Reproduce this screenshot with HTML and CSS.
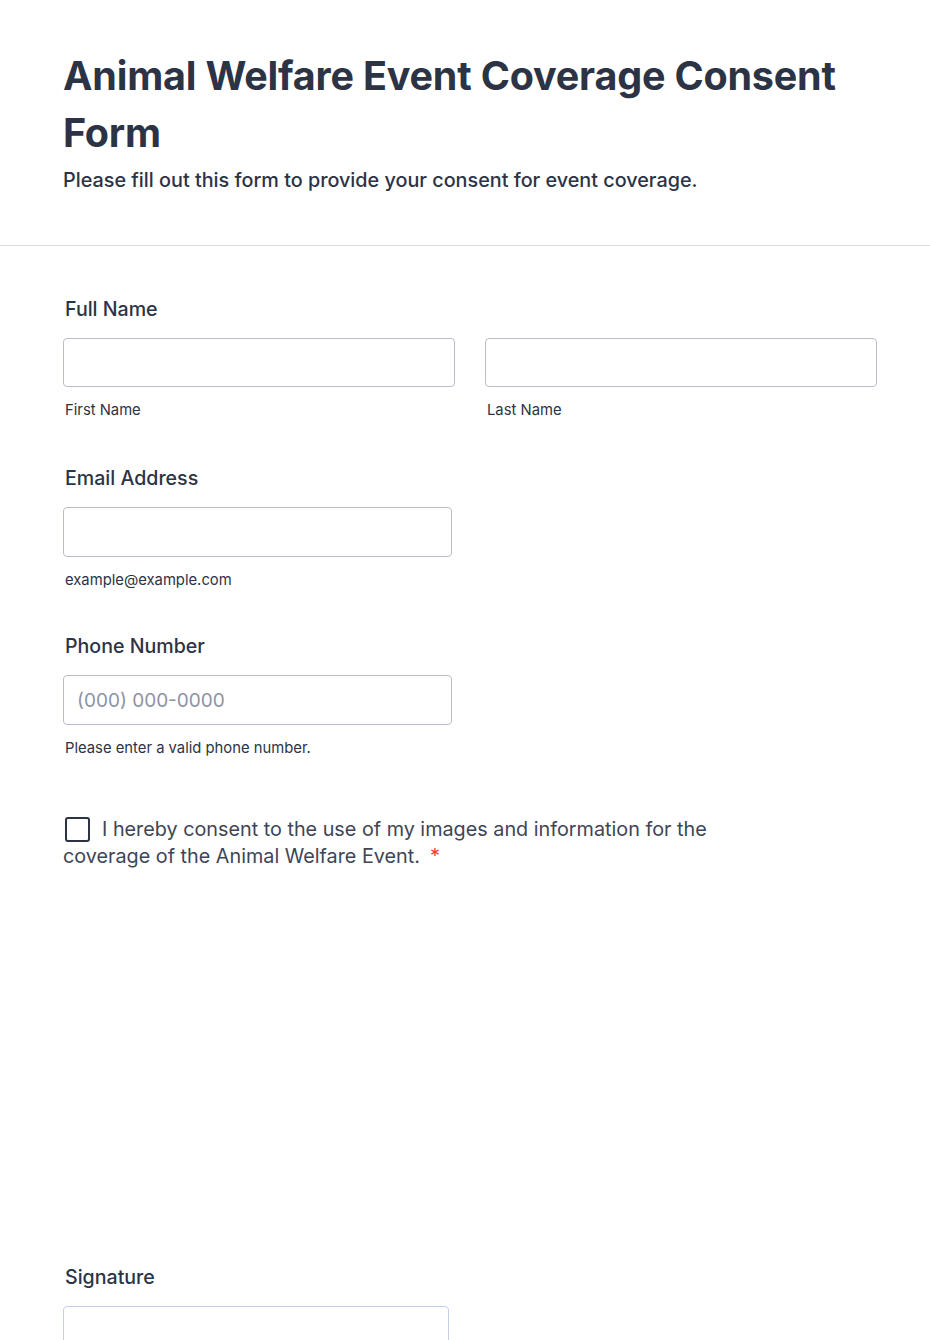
FILE: index.html
```html
<!DOCTYPE html>
<html lang="en">
<head>
  <meta charset="UTF-8" />
  <meta name="viewport" content="width=device-width, initial-scale=1.0" />
  <title>Animal Welfare Event Coverage Consent Form</title>
  <link rel="stylesheet" href="styles.css">
</head>
<body>
  <div class="form-header">
    <h1>Animal Welfare Event Coverage Consent Form</h1>
    <p class="subheader">Please fill out this form to provide your consent for event coverage.</p>
  </div>

  <form class="form-body">
    <div class="field name-field">
      <label class="field-label">Full Name</label>
      <div class="name-row">
        <div class="name-col">
          <input type="text" class="text-input" />
          <div class="sublabel">First Name</div>
        </div>
        <div class="name-col">
          <input type="text" class="text-input" />
          <div class="sublabel">Last Name</div>
        </div>
      </div>
    </div>

    <div class="field">
      <label class="field-label">Email Address</label>
      <input type="email" class="text-input half" />
      <div class="sublabel">example@example.com</div>
    </div>

    <div class="field">
      <label class="field-label">Phone Number</label>
      <input type="tel" class="text-input half" placeholder="(000) 000-0000" />
      <div class="sublabel">Please enter a valid phone number.</div>
    </div>

    <div class="field consent">
      <label class="consent-text"><span class="checkbox"></span>I hereby consent to the use of my images and information for the coverage of the Animal Welfare Event.<span class="required">*</span></label>
    </div>

    <div class="field signature">
      <label class="field-label">Signature</label>
      <div class="signature-pad"></div>
    </div>
  </form>
</body>
</html>
```

FILE: styles.css
```css
:root {
  --text: #2c3345;
  --border: #b8bdc9;
  --muted: #8c93a3;
}

body {
  margin: 0;
  font-family: 'Inter', 'Liberation Sans', sans-serif;
  color: var(--text);
  background: #fff;
}

.form-header {
  padding: 48px 40px 0 63px;
  height: 197px;
  border-bottom: 1px solid #dadde3;
}

h1 {
  margin: 0;
  font-size: 39.5px;
  line-height: 57px;
  font-weight: 700;
  letter-spacing: -0.2px;
}

.subheader {
  margin: 6px 0 0;
  font-size: 19.8px;
  line-height: 24px;
  font-weight: 500;
}

.form-body {
  padding: 51px 54px 0 63px;
}

.field {
  margin-bottom: 45px;
}

.name-field {
  margin-bottom: 47px;
}

.field-label {
  display: block;
  padding-left: 2px;
  font-size: 19.6px;
  line-height: 24px;
  font-weight: 500;
  margin-bottom: 17px;
}

.name-row {
  display: grid;
  grid-template-columns: 392px 392px;
  gap: 30px;
}

.text-input {
  display: block;
  box-sizing: border-box;
  width: 100%;
  height: 49px;
  margin: 0;
  padding: 0 13px;
  border: 1px solid var(--border);
  border-radius: 4px;
  font-family: inherit;
  font-size: 19px;
  color: var(--text);
  background: #fff;
}

.text-input.half {
  width: 389px;
  height: 50px;
}

.text-input::placeholder {
  color: var(--muted);
}

.sublabel {
  margin-top: 14px;
  padding-left: 2px;
  font-size: 14.8px;
  line-height: 18px;
}

.consent {
  margin-top: 59px;
}

.consent-text {
  display: block;
  max-width: 720px;
  font-size: 19.8px;
  line-height: 27px;
  color: #3e4556;
}

.checkbox {
  display: inline-block;
  box-sizing: border-box;
  width: 25px;
  height: 25px;
  margin: 0 12px 0 2px;
  border: 2px solid var(--text);
  border-radius: 3px;
  vertical-align: -6px;
}

.required {
  display: inline-block;
  color: #f23a3c;
  margin-left: 10px;
}

.signature {
  margin-top: 395px;
}

.signature .field-label {
  margin-bottom: 17px;
}

.signature-pad {
  width: 386px;
  height: 120px;
  box-sizing: border-box;
  border: 1px solid #c3d0e6;
  border-radius: 4px;
}
```
